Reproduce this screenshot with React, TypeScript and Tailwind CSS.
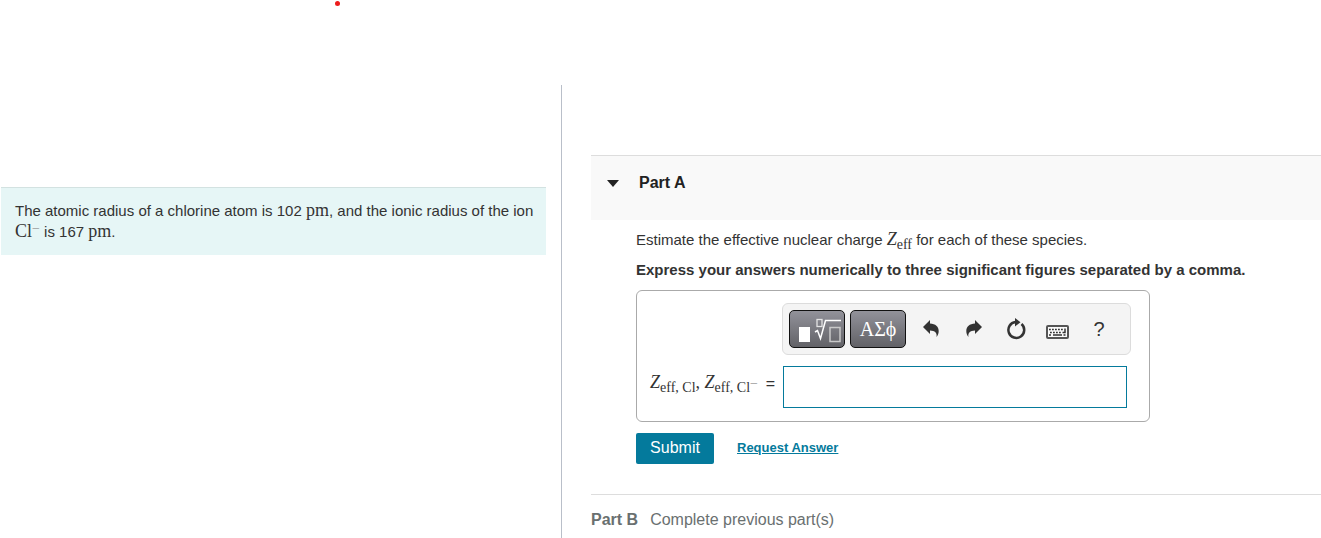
import type { ReactNode } from "react";

function MathText({ children }: { children: ReactNode }) {
  return (
    <span className="whitespace-nowrap font-['Liberation_Serif',serif] text-lg leading-none">{children}</span>
  );
}

function Sub({ children }: { children: ReactNode }) {
  return <span className="align-[-4px] text-sm leading-none">{children}</span>;
}

function Minus() {
  return <span className="align-[4px] text-sm leading-none text-[#999]">−</span>;
}

function TemplatesIcon() {
  return (
    <svg width="48" height="28" viewBox="0 0 48 28" fill="none" aria-hidden="true">
      <rect x="6" y="12" width="11" height="15" fill="#fff" />
      <rect x="24" y="4.500" width="5" height="7" stroke="#e4e4e4" strokeWidth="1.300" />
      <path d="M22 17l2.500-1.500 3 8 5-18H48" stroke="#fff" strokeWidth="1.500" />
      <rect x="37" y="12.500" width="10" height="14" stroke="#c9c9c9" strokeWidth="1.500" />
    </svg>
  );
}

function UndoIcon({ flipped = false }: { flipped?: boolean }) {
  return (
    <svg
      width="16"
      height="18"
      viewBox="0 0 16 18"
      aria-hidden="true"
      className={flipped ? "-scale-x-100" : ""}
    >
      <path d="M7 0v3.500c5.500.3 8.700 3 8.700 7.500 0 2.300-.8 4.500-2.200 6 .8-4-1.500-6.300-6.500-6.500V14L0 7z" fill="#333" />
    </svg>
  );
}

function ResetIcon() {
  return (
    <svg width="20" height="22" viewBox="0 0 20 22" fill="none" aria-hidden="true">
      <path d="M15.500 6A7.900 7.900 0 1 1 9.500 4.100" stroke="#333" strokeWidth="2.500" />
      <path d="M9 0l5.500 4.200L9 8.400z" fill="#333" />
    </svg>
  );
}

function KeyboardIcon() {
  return (
    <svg width="23" height="14" viewBox="0 0 23 14" fill="none" aria-hidden="true">
      <rect x="1" y="1" width="21" height="12" rx="1" fill="#fafafa" stroke="#555" strokeWidth="2" />
      <path d="M3 4.500h14M4 7.500h12" stroke="#333" strokeWidth="1.500" strokeDasharray="1.800 1.200" />
      <path d="M3 10h2M7 10h9M17.500 10h2M19 3.500V7.500h-2.500" stroke="#333" strokeWidth="1.500" />
    </svg>
  );
}

const darkKey =
  "flex h-[38px] w-14 items-center justify-center rounded-[5px] border border-[#111] bg-linear-to-b from-[#92929a] to-[#626267] text-white";

function Toolbar() {
  return (
    <div className="flex h-[52px] w-[349px] items-center rounded-md border border-[#dcdcdc] bg-[#f4f4f4] pl-1.5" role="toolbar" aria-label="Equation tools">
      <button type="button" aria-label="Templates" className={darkKey}>
        <TemplatesIcon />
      </button>
      <button type="button" aria-label="Symbols" className={`${darkKey} ml-[5px] font-['Liberation_Serif',serif] text-xl`}>
        ΑΣϕ
      </button>
      <div className="ml-1 flex text-[#333]">
        <button type="button" aria-label="Undo" className="flex w-[42px] items-center justify-center">
          <UndoIcon />
        </button>
        <button type="button" aria-label="Redo" className="flex w-[44px] items-center justify-center">
          <UndoIcon flipped />
        </button>
        <button type="button" aria-label="Reset" className="flex w-10 items-center justify-center">
          <ResetIcon />
        </button>
        <button type="button" aria-label="Keyboard shortcuts" className="flex w-[42px] items-center justify-center pt-1.5">
          <KeyboardIcon />
        </button>
        <button type="button" aria-label="Help" className="w-[42px] text-xl">
          ?
        </button>
      </div>
    </div>
  );
}

export default function App() {
  return (
    <main className="flex min-h-screen flex-col bg-white font-['Liberation_Sans',Arial,sans-serif] text-[#333]">
      <header className="h-[85px] pl-[335px] pt-px">
        <div className="size-[5px] rounded-full bg-[#ed1c1c]" />
      </header>
      <div className="grid grow grid-cols-[562fr_759fr]">
        <aside className="border-r border-[#b9bfc9] pl-px pr-[15px] pt-[102px]">
          <p className="min-h-[68px] border-t border-[#d3e2e1] bg-[#e6f6f6] pl-3.5 pr-1 pt-3 text-[15px] leading-[21px]">
            The atomic radius of a chlorine atom is 102 <MathText>pm</MathText>, and the ionic radius of the ion{" "}
            <MathText>
              Cl
              <Minus />
            </MathText>{" "}
            is 167 <MathText>pm</MathText>.
          </p>
        </aside>
        <section className="pl-[29px] pt-[70px]">
          <h2 className="flex h-[65px] border-t border-[#ddd] bg-[#f9f9f9] pl-4 pt-4 text-base font-bold text-[#222]">
            <button type="button" className="flex h-[22px] items-center gap-5">
              <svg width="12" height="7" viewBox="0 0 12 7" aria-hidden="true">
                <path d="M0 0h12L6 7z" fill="#222" />
              </svg>
              Part A
            </button>
          </h2>
          <div className="pl-[45px] pt-2.5">
            <p className="h-[30px] text-[15px] leading-5">
              Estimate the effective nuclear charge{" "}
              <MathText>
                <i>Z</i>
                <Sub>eff</Sub>
              </MathText>{" "}
              for each of these species.
            </p>
            <p className="h-[30px] text-[15px] font-bold leading-5">
              Express your answers numerically to three significant figures separated by a comma.
            </p>
            <form onSubmit={(event) => event.preventDefault()}>
              <div className="h-[132px] w-[514px] rounded-md border border-[#aaa] pl-[13px] pt-3">
                <div className="pl-[132px]">
                  <Toolbar />
                </div>
                <div className="mt-[11px] flex">
                  <label htmlFor="answer" className="flex h-9 w-[133px] items-center justify-between whitespace-nowrap pr-2 text-base">
                    <MathText>
                      <i>Z</i>
                      <Sub>eff, Cl</Sub>, <i>Z</i>
                      <Sub>
                        eff, Cl
                        <Minus />
                      </Sub>
                    </MathText>
                    <span>=</span>
                  </label>
                  <input id="answer" type="text" className="h-[42px] w-[344px] border border-[#047a9c] bg-white px-2 outline-none" />
                </div>
              </div>
              <div className="mt-[11px] flex gap-[23px] leading-[29px]">
                <button type="submit" className="h-[31px] w-[78px] rounded-xs bg-[#047a9c] pb-0.5 text-base text-white">
                  Submit
                </button>
                <a href="#answer" className="text-[13px] font-bold text-[#047a9c] underline">
                  Request Answer
                </a>
              </div>
            </form>
          </div>
          <div className="mt-[30px] flex gap-3 border-t border-[#ddd] pt-[13px] text-base text-[#6a7070]">
            <h2 className="font-bold">Part B</h2>
            <p>Complete previous part(s)</p>
          </div>
        </section>
      </div>
    </main>
  );
}
